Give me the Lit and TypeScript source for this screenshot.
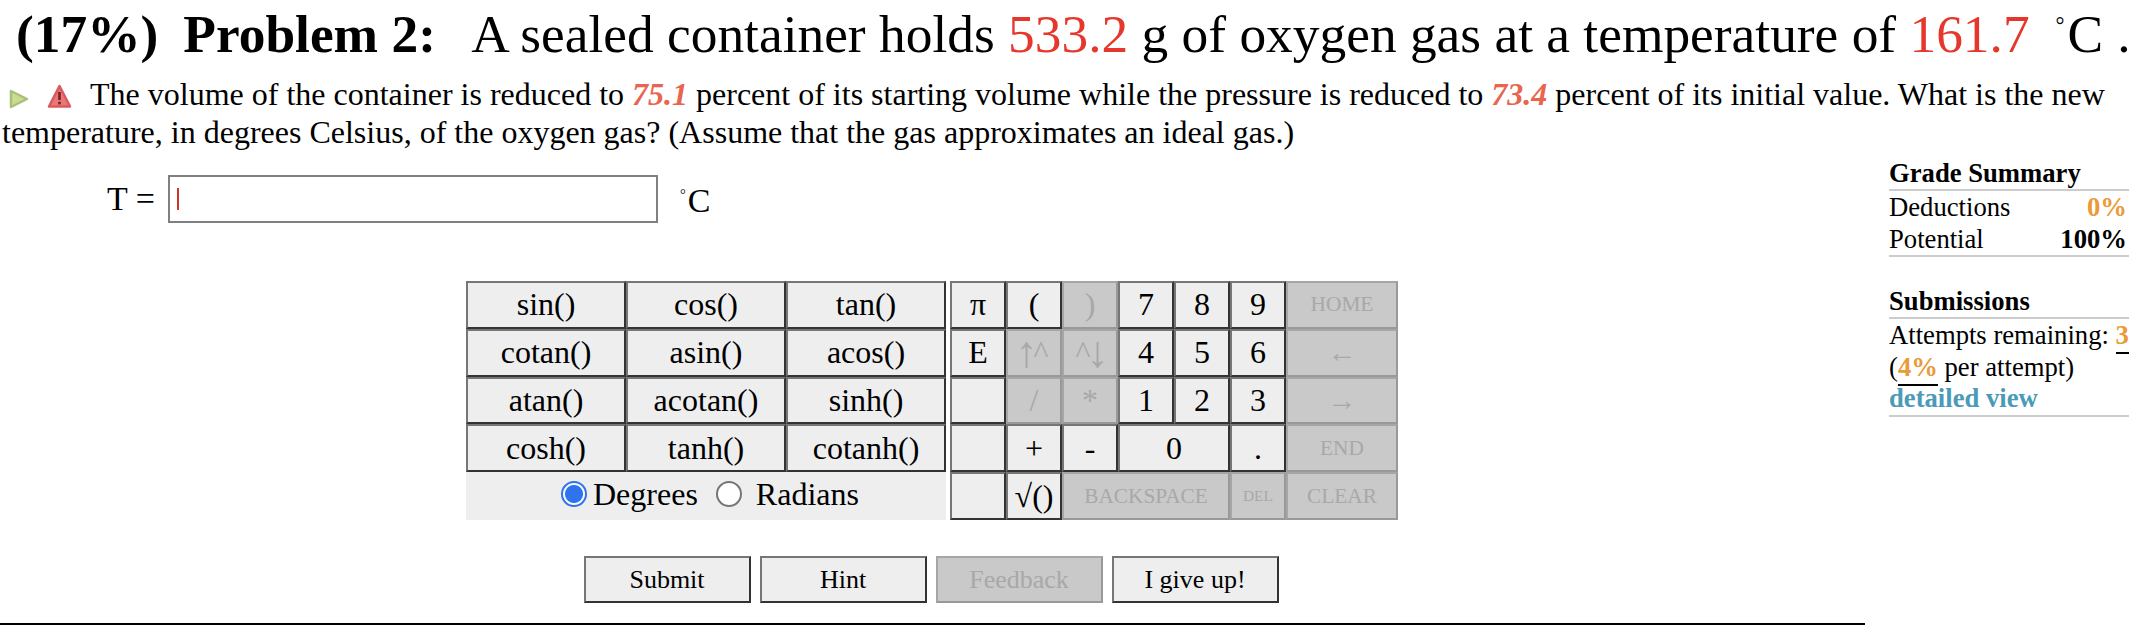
import { LitElement, html, css } from "lit";
import { customElement } from "lit/decorators.js";

type Key = { t?: unknown; off?: boolean; cls?: string };

const FUNCS = ["sin()", "cos()", "tan()", "cotan()", "asin()", "acos()", "atan()", "acotan()", "sinh()", "cosh()", "tanh()", "cotanh()"];

const UP = html`<span class="tall">↑</span>^`;
const DOWN = html`^<span class="tall">↓</span>`;

const PAD: Key[] = [
  { t: "π" }, { t: "(" }, { t: ")", off: true }, { t: "7" }, { t: "8" }, { t: "9" }, { t: "HOME", off: true, cls: "small" },
  { t: "E" }, { t: UP, off: true }, { t: DOWN, off: true }, { t: "4" }, { t: "5" }, { t: "6" }, { t: "←", off: true, cls: "arrow" },
  { t: "" }, { t: "/", off: true }, { t: "*", off: true }, { t: "1" }, { t: "2" }, { t: "3" }, { t: "→", off: true, cls: "arrow" },
  { t: "" }, { t: "+" }, { t: "-" }, { t: "0", cls: "span2" }, { t: "." }, { t: "END", off: true, cls: "small" },
  { t: "" }, { t: "√()" }, { t: "BACKSPACE", off: true, cls: "small span3" }, { t: "DEL", off: true, cls: "tiny" }, { t: "CLEAR", off: true, cls: "small" },
];

@customElement("app-root")
export class AppRoot extends LitElement {
  static styles = css`
    :host {
      display: block;
      width: 2142px;
      height: 625px;
      overflow: hidden;
      background: #fff;
      color: #000;
      font-family: "Liberation Serif", "Times New Roman", serif;
    }
    h1 {
      margin: 0;
      padding: 4px 0 0 16px;
      font-size: 53.4px;
      line-height: 60px;
      font-weight: 400;
      white-space: nowrap;
    }
    h1 b { margin-right: 25px; }
    .red { color: #e5372c; }
    .deg { font-size: 0.42em; line-height: 0; vertical-align: 0.85em; margin: 0 3px 0 26px; }
    .tail { margin-left: 14px; }
    .q {
      margin: 11px 0 0;
      padding-left: 2px;
      font-size: 32px;
      line-height: 38px;
    }
    .q svg { vertical-align: -4px; }
    .q .i1 { margin: 0 18px 0 7px; }
    .q .i2 { margin-right: 18px; }
    .q em { color: #e8654f; font-weight: 700; }
    .row { display: flex; height: 474px; }
    .main {
      width: 1865px;
      box-sizing: border-box;
      border-bottom: 2px solid #000;
    }
    .side { width: 240px; margin-left: 24px; padding-top: 6px; font-size: 26.67px; }
    .answer {
      display: flex;
      align-items: center;
      height: 48px;
      margin-top: 24px;
      padding-left: 107px;
      font-size: 34px;
    }
    .eq { width: 61px; }
    .input {
      box-sizing: border-box;
      width: 490px;
      height: 48px;
      border: 2px solid #808080;
      display: flex;
      align-items: center;
      padding-left: 7px;
    }
    .caret { width: 2px; height: 22px; background: #d0342c; }
    .unit { margin-left: 22px; padding-top: 3px; font-size: 34px; }
    .unit .deg { margin: 0 2px 0 0; }
    .keypad {
      display: flex;
      justify-content: center;
      gap: 4px;
      margin: 58px 1px 0 0;
      font-size: 32px;
    }
    .funcs {
      display: grid;
      grid-template-columns: repeat(3, 160px);
      grid-template-rows: repeat(4, 47.75px) 48px;
    }
    .pad {
      display: grid;
      grid-template-columns: repeat(6, 56px) 112px;
      grid-template-rows: repeat(4, 47.75px) 48px;
    }
    .key {
      box-sizing: border-box;
      display: flex;
      align-items: center;
      justify-content: center;
      border: 2px solid;
      border-color: #767676 #333 #333 #767676;
      background: #eee;
      white-space: nowrap;
      min-width: 0;
      overflow: hidden;
    }
    .key.off {
      background: #c9c9c9;
      color: #a8a8a8;
      border-color: #a6a6a6 #999 #999 #a6a6a6;
    }
    .key.small { font-size: 21.33px; }
    .key.arrow { font-size: 29px; }
    .key.tiny { font-size: 15.5px; }
    .key.span2 { grid-column: span 2; }
    .key.span3 { grid-column: span 3; }
    .tall { font-size: 44px; line-height: 0; margin: 0 -4px; }
    .mode {
      grid-column: span 3;
      display: flex;
      align-items: center;
      box-sizing: border-box;
      background: #eee;
      padding: 0 0 4px 95px;
    }
    .mode input {
      appearance: none;
      box-sizing: border-box;
      width: 26px;
      height: 26px;
      margin: 0;
      border-radius: 50%;
      border: 2px solid #767676;
      background: #fff;
    }
    .mode input:checked {
      border-color: #2f73f0;
      background: radial-gradient(circle, #2f73f0 0 8.5px, #fff 9.5px);
    }
    .mode .l1 { margin: 0 18px 0 6px; }
    .mode .l2 { margin-left: 14px; }
    .actions {
      display: flex;
      justify-content: center;
      gap: 9px;
      margin: 36px 3px 0 0;
      font-size: 26px;
    }
    .actions .key { width: 167px; height: 47px; }
    .sec {
      padding-top: 1px;
      border-bottom: 2px solid #ccc;
      line-height: 31.5px;
    }
    .head {
      font-weight: 700;
      line-height: 32px;
      border-bottom: 2px solid #ccc;
    }
    .kv { display: flex; justify-content: space-between; padding-right: 2px; }
    .kv b { font-weight: 700; }
    .orange { color: #ea9a38; font-weight: 700; }
    .u { border-bottom: 2px solid #000; padding-bottom: 2px; }
    .gap { margin-top: 28px; }
    .link { color: #4a9ab8; font-weight: 700; }
  `;

  render() {
    return html`
      <h1><b>(17%)</b><b>Problem 2:</b> A sealed container holds <span class="red">533.2</span> g of oxygen gas at a temperature of <span class="red">161.7</span><span class="deg">°</span>C<span class="tail">.</span></h1>
      <p class="q">
        <svg class="i1" width="20" height="20" viewBox="0 0 20 20"><path d="M2 2 L18 10 L2 18 Z" fill="#c9dc8f" stroke="#a9bf7a" stroke-width="2.5" stroke-linejoin="round"/></svg><svg class="i2" width="25" height="25" viewBox="0 0 25 25"><path d="M12.5 2 L23 22.5 L2 22.5 Z" fill="#e8777a" stroke="#d9595c" stroke-width="2.5" stroke-linejoin="round"/><path d="M12.5 8 V16" stroke="#7a1f22" stroke-width="2.6"/><circle cx="12.5" cy="19" r="1.5" fill="#7a1f22"/></svg>The volume of the container is reduced to <em>75.1</em> percent of its starting volume while the pressure is reduced to <em>73.4</em> percent of its initial value. What is the new temperature, in degrees Celsius, of the oxygen gas? (Assume that the gas approximates an ideal gas.)
      </p>
      <div class="row">
        <div class="main">
          <div class="answer">
            <span class="eq">T =</span>
            <div class="input"><span class="caret"></span></div>
            <span class="unit"><span class="deg">°</span>C</span>
          </div>
          <div class="keypad">
            <div class="funcs">
              ${FUNCS.map((f) => html`<div class="key">${f}</div>`)}
              <div class="mode">
                <input type="radio" name="m" checked />
                <span class="l1">Degrees</span>
                <input type="radio" name="m" />
                <span class="l2">Radians</span>
              </div>
            </div>
            <div class="pad">
              ${PAD.map((k) => html`<div class="key ${k.off ? "off" : ""} ${k.cls ?? ""}">${k.t}</div>`)}
            </div>
          </div>
          <div class="actions">
            <div class="key">Submit</div>
            <div class="key">Hint</div>
            <div class="key off">Feedback</div>
            <div class="key">I give up!</div>
          </div>
        </div>
        <aside class="side">
          <div class="head">Grade Summary</div>
          <div class="sec">
            <div class="kv"><span>Deductions</span><span class="orange">0%</span></div>
            <div class="kv"><span>Potential</span><b>100%</b></div>
          </div>
          <div class="head gap">Submissions</div>
          <div class="sec">
            <div>Attempts remaining: <span class="orange u">3</span></div>
            <div>(<span class="orange u">4%</span> per attempt)</div>
            <div class="link">detailed view</div>
          </div>
        </aside>
      </div>
    `;
  }
}
